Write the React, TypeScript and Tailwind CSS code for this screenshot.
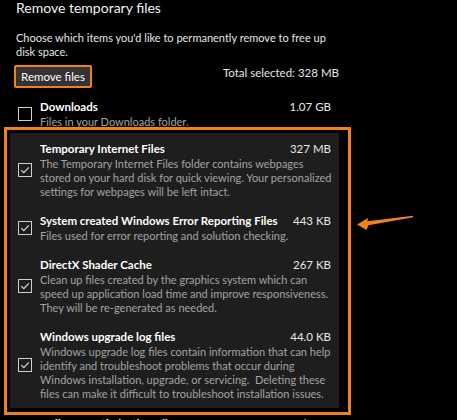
import React from "react";

type Item = {
  title: string;
  size: string;
  lines: string[];
  checked: boolean;
};

const items: Item[] = [
  {
    title: "Temporary Internet Files",
    size: "327 MB",
    checked: true,
    lines: [
      "The Temporary Internet Files folder contains webpages",
      "stored on your hard disk for quick viewing. Your personalized",
      "settings for webpages will be left intact.",
    ],
  },
  {
    title: "System created Windows Error Reporting Files",
    size: "443 KB",
    checked: true,
    lines: ["Files used for error reporting and solution checking."],
  },
  {
    title: "DirectX Shader Cache",
    size: "267 KB",
    checked: true,
    lines: [
      "Clean up files created by the graphics system which can",
      "speed up application load time and improve responsiveness.",
      "They will be re-generated as needed.",
    ],
  },
  {
    title: "Windows upgrade log files",
    size: "44.0 KB",
    checked: true,
    lines: [
      "Windows upgrade log files contain information that can help",
      "identify and troubleshoot problems that occur during",
      "Windows installation, upgrade, or servicing.  Deleting these",
      "files can make it difficult to troubleshoot installation issues.",
    ],
  },
];

function Checkbox({ checked }: { checked: boolean }) {
  return (
    <div className="flex h-[14px] w-[14px] shrink-0 items-center justify-center border-[1.5px] border-[#cfcfcf]">
      {checked && (
        <svg width="10" height="10" viewBox="0 0 10 10" fill="none">
          <path d="M1.3 5.2 L3.8 7.7 L8.8 2.3" stroke="#d8d8d8" strokeWidth="1.2" />
        </svg>
      )}
    </div>
  );
}

function Row({ item }: { item: Item }) {
  return (
    <div className="flex items-center gap-2">
      <Checkbox checked={item.checked} />
      <div className="min-w-0 flex-1">
        <div className="flex justify-between text-[11.5px] leading-[16px]">
          <span className="whitespace-nowrap font-bold text-white">{item.title}</span>
          <span className="whitespace-nowrap text-[11.5px] text-[#e8e8e8]">{item.size}</span>
        </div>
        <div className="text-[11px] leading-[14px] text-[#a3a3a3]">
          {item.lines.map((l) => (
            <div key={l} className="whitespace-pre">
              {l}
            </div>
          ))}
        </div>
      </div>
    </div>
  );
}

export default function App() {
  return (
    <div
      className="relative h-[420px] w-[457px] overflow-hidden bg-black text-white"
      style={{ fontFamily: '"Segoe UI", Lato, sans-serif' }}
    >
      <div className="pl-4 text-[14px] leading-[15px] text-[#f2f2f2]">Remove temporary files</div>

      <div className="mt-[16px] pl-4 text-[11px] leading-[14px] text-[#e6e6e6]">
        <div>Choose which items you'd like to permanently remove to free up</div>
        <div>disk space.</div>
      </div>

      <div className="mt-[6px] flex w-[339px] items-start justify-between pl-[14px]">
        <button className="h-[23px] w-[78px] rounded-[2px] border-2 border-[#f0821e] bg-[#333333] text-[11.5px] leading-[19px] text-white">
          Remove files
        </button>
        <span className="mt-[1px] text-[11.5px] leading-[14px] text-[#e6e6e6]">Total selected: 328 MB</span>
      </div>

      <div className="mt-[11px] flex w-[331px] items-center gap-2 pl-[18px]">
        <Checkbox checked={false} />
        <div className="min-w-0 flex-1">
          <div className="flex justify-between text-[11.5px] leading-[16px]">
            <span className="font-bold text-white">Downloads</span>
            <span className="text-[#e8e8e8]">1.07 GB</span>
          </div>
          <div className="text-[11px] leading-[14px] text-[#a3a3a3]">Files in your Downloads folder.</div>
        </div>
      </div>

      <div className="relative ml-[4px] mt-[-2px] w-[347px] border-[3px] border-[#f0821e] bg-black pb-[4px] pl-[3px] pr-[9px] pt-[3px]">
        <div className="flex w-[329px] flex-col gap-[14px] bg-[#1e1e1e] pb-[7px] pl-2 pr-2 pt-2">
          {items.map((it) => (
            <Row key={it.title} item={it} />
          ))}
        </div>
      </div>

      <div className="mt-[1px] flex w-[331px] justify-between pl-[40px] text-[11.5px] leading-[16px]">
        <span className="font-bold text-white">Delivery Optimization Files</span>
        <span className="text-[#e8e8e8]">0 bytes</span>
      </div>

      <svg className="absolute left-[352px] top-[210px]" width="66" height="24" viewBox="352 210 66 24">
        <polygon
          points="357,224.5 368,218 367.5,221.3 413,215.8 413.3,217.2 368.5,225.3 366.5,230"
          fill="#f0821e"
        />
      </svg>
    </div>
  );
}
